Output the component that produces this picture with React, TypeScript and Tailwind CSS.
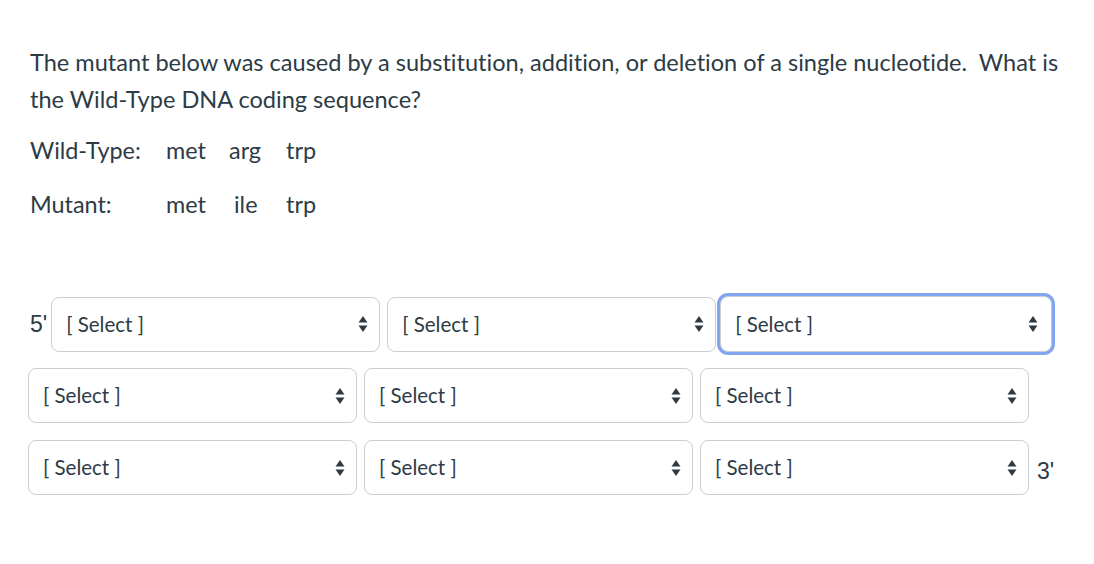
import React from "react";

function Arrows() {
  return (
    <svg width="10" height="18" viewBox="0 0 10 18" className="shrink-0">
      <path d="M5 1 L9.5 7.5 L0.5 7.5 Z" fill="#2d3b45" />
      <path d="M5 17 L9.5 10.5 L0.5 10.5 Z" fill="#2d3b45" />
    </svg>
  );
}

function Sel({ focused = false }: { focused?: boolean }) {
  if (focused) {
    return (
      <div className="flex h-[56px] w-[332px] items-center justify-between rounded-[8px] border border-[#c7cdd1] bg-white pl-[14px] pr-[13px] text-[20.5px] text-[#2d3b45] shadow-[0_0_0_3px_#7fa6ee]">
        <span>[ Select ]</span>
        <Arrows />
      </div>
    );
  }
  return (
    <div className="flex h-[55px] w-[329px] items-center justify-between rounded-[8px] border border-[#c7cdd1] bg-white pl-[14px] pr-[11px] text-[20.5px] text-[#2d3b45]">
      <span>[ Select ]</span>
      <Arrows />
    </div>
  );
}

export default function App() {
  return (
    <div
      className="min-h-[564px] w-[1094px] bg-white pl-[30px] pt-[44px] text-[#2d3b45] [font-variant-ligatures:none]"
      style={{ fontFamily: "Lato, 'Open Sans', sans-serif" }}
    >
      <p className="w-[1050px] text-[23.55px] leading-[37px]">
        The mutant below was caused by a substitution, addition, or deletion of a single nucleotide.&nbsp; What is the Wild-Type DNA coding sequence?
      </p>
      <div className="mt-[14px] grid grid-cols-[136px_63px_57px_auto] text-[23.4px] leading-[37px]">
        <span>Wild-Type:</span>
        <span>met</span>
        <span>arg</span>
        <span>trp</span>
      </div>
      <div className="mt-[17px] grid grid-cols-[136px_68px_52px_auto] text-[23.4px] leading-[37px]">
        <span>Mutant:</span>
        <span>met</span>
        <span>ile</span>
        <span>trp</span>
      </div>
      <div className="mt-[73px] flex items-center">
        <span className="mr-[4px] text-[23px]" style={{ fontFamily: "'Liberation Sans', Arial, sans-serif" }}>5'</span>
        <div className="flex items-center">
          <Sel />
          <div className="ml-[7px]"><Sel /></div>
          <div className="ml-[4px]"><Sel focused /></div>
        </div>
      </div>
      <div className="-ml-[2px] mt-[16px] flex gap-[7px]">
        <Sel />
        <Sel />
        <Sel />
      </div>
      <div className="-ml-[2px] mt-[17px] flex items-center gap-[7px]">
        <Sel />
        <Sel />
        <Sel />
        <span className="ml-[1px] mt-[8px] text-[23px]" style={{ fontFamily: "'Liberation Sans', Arial, sans-serif" }}>3'</span>
      </div>
    </div>
  );
}
